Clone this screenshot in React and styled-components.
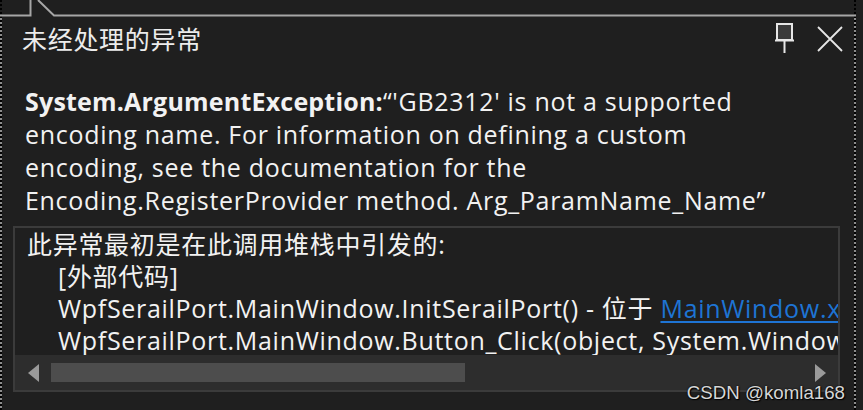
import React from "react";
import styled, { createGlobalStyle } from "styled-components";

const GlobalStyle = createGlobalStyle`
  html, body {
    margin: 0;
    padding: 0;
    background: #1f1f1f;
    overflow: hidden;
  }
`;

const Screen = styled.div`
  width: 863px;
  height: 410px;
  background: #1f1f1f;
  position: relative;
  overflow: hidden;
  font-family: "Open Sans", "Noto Sans CJK SC", sans-serif;
  color: #f2f2f2;
`;

const Panel = styled.div`
  width: 852px;
  height: 410px;
  border-left: 2px dotted #000;
  border-right: 2px dotted #000;
  background: linear-gradient(#1f1f1f, #1f1f1f) padding-box,
    linear-gradient(#1f1f1f 0 15px, #8c8c8c 15px) border-box;
  display: flex;
  flex-direction: column;
  position: relative;
`;

const EdgeLine = styled.svg`
  position: absolute;
  top: 0;
  left: -2px;
  width: 856px;
  height: 17px;
`;

const Header = styled.div`
  display: flex;
  align-items: center;
  height: 52px;
  margin-top: 16px;
  padding: 0 10px 0 20px;
`;

const Title = styled.div`
  flex: 1;
  font-family: "Noto Sans CJK SC", sans-serif;
  font-size: 25px;
  letter-spacing: 0.7px;
  color: #ececec;
  margin-top: -8px;
`;

const IconButton = styled.button`
  background: none;
  border: 0;
  padding: 0;
  width: ${(p) => p.$w}px;
  height: 32px;
  display: flex;
  align-items: center;
  justify-content: center;
  margin-left: ${(p) => p.$gap}px;
  margin-top: -6px;
`;

const Message = styled.div`
  margin-top: 17px;
  padding-left: 23px;
  font-size: 25px;
  letter-spacing: 0.7px;
  line-height: 33px;
  white-space: nowrap;
`;

const Bold = styled.span`
  font-weight: 700;
  letter-spacing: 0.2px;
`;

const StackBox = styled.div`
  margin: 9px 14px 0 11px;
  height: 162px;
  border: 2px solid #3b3b3b;
  display: flex;
  flex-direction: column;
  overflow: hidden;
`;

const StackText = styled.div`
  flex: 1;
  overflow: hidden;
  padding: 0 0 0 12px;
  font-size: 25px;
  letter-spacing: 0.7px;
  line-height: 32px;
  white-space: nowrap;
`;

const Frame = styled.div`
  padding-left: ${(p) => (p.$indent ? 31 : 0)}px;
`;

const Link = styled.a`
  color: #1e74d4;
  text-decoration: underline;
  text-underline-offset: 3px;
`;

const ScrollBar = styled.div`
  flex: none;
  height: 35px;
  background: #2d2d2d;
  display: flex;
  align-items: center;
  padding: 0 12px 0 13px;
  gap: 12px;
`;

const Arrow = styled.div`
  width: 0;
  height: 0;
  border-top: 9px solid transparent;
  border-bottom: 9px solid transparent;
  ${(p) =>
    p.$dir === "left"
      ? "border-right: 11px solid #9a9a9a;"
      : "border-left: 11px solid #9a9a9a;"}
`;

const Track = styled.div`
  flex: 1;
  height: 19px;
  display: flex;
`;

const Thumb = styled.div`
  width: 414px;
  background: #4d4d4d;
`;

const Watermark = styled.div`
  position: absolute;
  right: 18px;
  bottom: 6px;
  font-family: "Liberation Sans", Arial, sans-serif;
  font-size: 18.7px;
  color: #d6d6d6;
  text-shadow: 1px 1px 1px #000, 0 0 2px #000;
`;

function PinIcon() {
  return (
    <svg width="22" height="32" viewBox="0 0 22 32">
      <rect x="3" y="1" width="15" height="16" fill="#3a3a3a" stroke="#e6e6e6" strokeWidth="2" />
      <line x1="1" y1="17.5" x2="20" y2="17.5" stroke="#e6e6e6" strokeWidth="2" />
      <line x1="10.5" y1="18" x2="10.5" y2="30" stroke="#e6e6e6" strokeWidth="2" />
    </svg>
  );
}

function CloseIcon() {
  return (
    <svg width="26" height="26" viewBox="0 0 26 26">
      <path d="M1 1 L25 25 M25 1 L1 25" stroke="#e6e6e6" strokeWidth="1.8" />
    </svg>
  );
}

export default function App() {
  return (
    <>
      <GlobalStyle />
      <Screen>
        <Panel>
          <EdgeLine viewBox="0 0 856 17">
            <path
              d="M0 15.5 H30.5 V0 M38 0 L54 15.5 H856"
              fill="none"
              stroke="#a6a6a6"
              strokeWidth="2"
            />
          </EdgeLine>
          <Header>
            <Title>未经处理的异常</Title>
            <IconButton $w={22} $gap={0}>
              <PinIcon />
            </IconButton>
            <IconButton $w={28} $gap={20}>
              <CloseIcon />
            </IconButton>
          </Header>
          <Message>
            <div>
              <Bold>System.ArgumentException:</Bold>“'GB2312' is not a supported
            </div>
            <div>encoding name. For information on defining a custom</div>
            <div>encoding, see the documentation for the</div>
            <div>Encoding.RegisterProvider method. Arg_ParamName_Name”</div>
          </Message>
          <StackBox>
            <StackText>
              <Frame>此异常最初是在此调用堆栈中引发的:</Frame>
              <Frame $indent>[外部代码]</Frame>
              <Frame $indent>
                WpfSerailPort.MainWindow.InitSerailPort() - 位于 <Link>MainWindow.xaml.cs</Link>
              </Frame>
              <Frame $indent>
                WpfSerailPort.MainWindow.Button_Click(object, System.Windows.RoutedEventArgs)
              </Frame>
            </StackText>
            <ScrollBar>
              <Arrow $dir="left" />
              <Track>
                <Thumb />
              </Track>
              <Arrow $dir="right" />
            </ScrollBar>
          </StackBox>
        </Panel>
        <Watermark>CSDN @komla168</Watermark>
      </Screen>
    </>
  );
}
